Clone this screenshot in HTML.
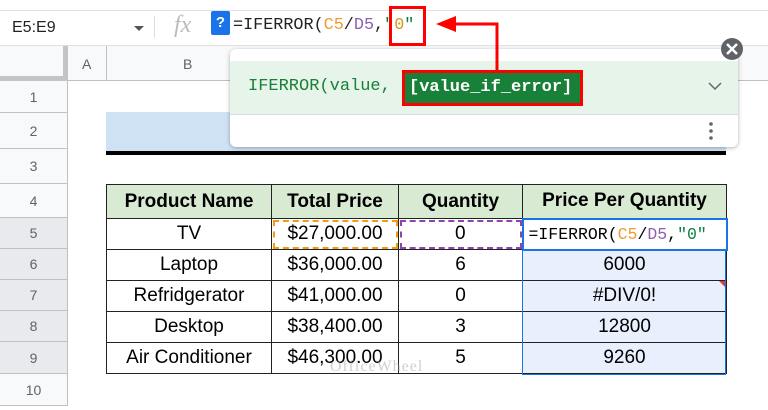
<!DOCTYPE html>
<html><head><style>
*{margin:0;padding:0;box-sizing:border-box}
body{width:768px;height:410px;background:#fff;position:relative;overflow:hidden;font-family:"Liberation Sans",Arial,sans-serif}
.a{position:absolute}
.mono{font-family:"Liberation Mono",monospace}
.rh{position:absolute;left:0;width:68px;background:#f8f9fa;border-bottom:1px solid #c0c0c0;border-right:1px solid #c0c0c0;text-align:center;color:#5f6368;font-size:14px}
table{position:absolute;left:106px;top:184px;border-collapse:collapse;font-size:19px;color:#000}
td{border:1.5px solid #222;text-align:center;height:31px;padding:0}
</style></head><body>
<div class="a" style="left:0;top:10px;width:768px;height:1px;background:#e0e0e0"></div>
<div class="a" style="left:0;top:45px;width:768px;height:1px;background:#e0e0e0"></div>
<div class="a" style="left:12px;top:19px;font-size:16px;color:#222">E5:E9</div>
<div class="a" style="left:134px;top:26px;width:0;height:0;border-left:5px solid transparent;border-right:5px solid transparent;border-top:5px solid #555"></div>
<div class="a" style="left:154px;top:16px;width:1px;height:22px;background:#ddd"></div>
<div class="a" style="left:174px;top:12px;font-size:24px;color:#bbb;font-family:'Liberation Serif',serif;font-style:italic">fx</div>
<div class="a" style="left:211px;top:11px;width:19px;height:24px;background:#1a73e8;border-radius:2px;color:#fff;font-weight:bold;font-size:15px;text-align:center;line-height:24px">?</div>
<div class="a mono" style="left:233px;top:16px;font-size:16.8px;color:#222">=IFERROR(<span style="color:#f09b33">C5</span>/<span style="color:#8e5fb0">D5</span>,<span style="color:#0b8043">"</span><span style="color:#d39a1a">0</span><span style="color:#0b8043">"</span></div>
<div class="a" style="left:389px;top:6px;width:37px;height:40px;border:3px solid #f00"></div>
<!-- column header -->
<div class="a" style="left:0;top:46px;width:768px;height:35px;background:#f8f9fa;border-bottom:1px solid #c0c0c0"></div>
<div class="a" style="left:0;top:46px;width:68px;height:35px;border-right:5px solid #c4c4c4;border-bottom:5px solid #c4c4c4"></div>
<div class="a" style="left:106px;top:46px;width:1px;height:35px;background:#c0c0c0"></div>
<div class="a" style="left:82px;top:56px;font-size:14px;color:#5f6368">A</div>
<div class="a" style="left:183px;top:56px;font-size:14px;color:#5f6368">B</div>
<!-- row headers -->
<div class="rh" style="top:81px;height:32px;line-height:32px">1</div>
<div class="rh" style="top:113px;height:36px;line-height:36px">2</div>
<div class="rh" style="top:149px;height:35px;line-height:35px">3</div>
<div class="rh" style="top:184px;height:34px;line-height:34px">4</div>
<div class="rh" style="top:218px;height:31px;line-height:31px;background:#e8eaed">5</div>
<div class="rh" style="top:249px;height:31px;line-height:31px;background:#e8eaed">6</div>
<div class="rh" style="top:280px;height:31px;line-height:31px;background:#e8eaed">7</div>
<div class="rh" style="top:311px;height:31px;line-height:31px;background:#e8eaed">8</div>
<div class="rh" style="top:342px;height:32px;line-height:32px;background:#e8eaed">9</div>
<div class="rh" style="top:374px;height:32px;line-height:32px">10</div>
<!-- blue band and line -->
<div class="a" style="left:106px;top:112px;width:620px;height:39px;background:#cfe2f3"></div>
<div class="a" style="left:106px;top:151px;width:620px;height:4px;background:#000"></div>
<!-- table -->
<table>
<colgroup><col style="width:165px"><col style="width:127px"><col style="width:124px"><col style="width:204px"></colgroup>
<tr style="background:#d9ead3;font-weight:bold;height:34px"><td>Product Name</td><td>Total Price</td><td>Quantity</td><td>Price Per Quantity</td></tr>
<tr><td>TV</td><td style="outline:2px dashed #f39c12;outline-offset:-3px">$27,000.00</td><td style="outline:2px dashed #8e44ad;outline-offset:-3px">0</td><td class="mono" style="font-size:16.5px;text-align:left;padding-left:5px;border:2.5px solid #1a73e8;white-space:nowrap">=IFERROR(<span style="color:#f09b33">C5</span>/<span style="color:#8e5fb0">D5</span>,<span style="color:#0b8043">"0"</span></td></tr>
<tr><td>Laptop</td><td>$36,000.00</td><td>6</td><td style="background:#e8f0fe">6000</td></tr>
<tr><td>Refridgerator</td><td>$41,000.00</td><td>0</td><td style="background:#e8f0fe;position:relative">#DIV/0!<span style="position:absolute;right:0;top:0;border-left:7px solid transparent;border-top:7px solid #e53935"></span></td></tr>
<tr><td>Desktop</td><td>$38,400.00</td><td>3</td><td style="background:#e8f0fe">12800</td></tr>
<tr><td>Air Conditioner</td><td>$46,300.00</td><td>5</td><td style="background:#e8f0fe">9260</td></tr>
</table>
<div class="a" style="left:522px;top:249px;width:204px;height:126px;border:1.5px solid #1a73e8;border-top:none"></div>
<div class="a" style="left:330px;top:358px;font-size:16px;color:rgba(150,150,150,0.45);font-family:'Liberation Serif',serif;letter-spacing:1px">OfficeWheel</div>
<!-- popup -->
<div class="a" style="left:230px;top:49px;width:508px;height:98px;background:#fff;border-radius:6px;box-shadow:0 1px 4px rgba(0,0,0,0.3)"></div>
<div class="a" style="left:230px;top:61px;width:508px;height:54px;background:#e6f4ea;border-bottom:1px solid #dadce0"></div>
<div class="a mono" style="left:248px;top:77px;font-size:17px;color:#188038;white-space:pre">IFERROR(value,                 )</div>
<div class="a mono" style="left:402px;top:70px;width:181px;height:36px;border:3px solid #f00;background:#188038;color:#fff;font-size:17px;font-weight:bold;line-height:30px;padding-left:4px;white-space:nowrap;overflow:hidden">[value_if_error]</div>
<svg class="a" style="left:0;top:0" width="768" height="410">
<path d="M497 71 V24 H450" fill="none" stroke="#f00" stroke-width="3"/>
<path d="M436 24 L456 16 L456 32 Z" fill="#f00"/>
<path d="M709 83 L715 89 L721 83" fill="none" stroke="#666" stroke-width="1.5"/>
<circle cx="711" cy="124" r="1.8" fill="#666"/><circle cx="711" cy="131" r="1.8" fill="#666"/><circle cx="711" cy="138" r="1.8" fill="#666"/>
<circle cx="732" cy="49" r="11" fill="#5f6368"/>
<path d="M727 44 L737 54 M737 44 L727 54" stroke="#fff" stroke-width="2.5"/>
</svg>
</body></html>
